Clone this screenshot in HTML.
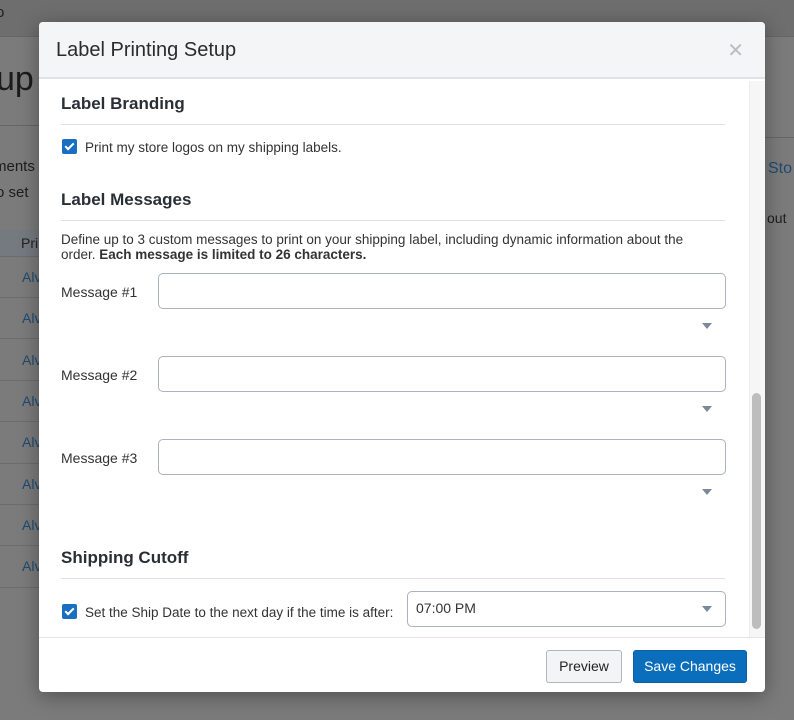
<!DOCTYPE html>
<html><head><style>
*{box-sizing:border-box;margin:0;padding:0}
body{width:794px;height:720px;overflow:hidden;background:#7b7b7b;font-family:"Liberation Sans",sans-serif;position:relative;color:#222}
.abs{position:absolute}
.bgt{font-size:15px;color:#1d1d1d}
.row{position:absolute;left:0;width:39px;height:1px;background:#6c6c6c}
.alw{position:absolute;left:22px;font-size:14px;color:#1f4a70}
.modal{position:absolute;left:39px;top:22px;width:726px;height:670px;background:#fff;border-radius:4px;overflow:hidden;box-shadow:0 4px 20px rgba(0,0,0,.35)}
.hdr{height:57px;background:#f4f5f6;border-bottom:2px solid #e0e3e6;padding:17px 0 0 17px;font-size:20px;color:#2b2b2b}
.x{position:absolute;right:21px;top:16px;font-size:20px;color:#b8bec5}
h3{position:absolute;left:22px;font-size:17px;font-weight:bold;color:#2a2f35}
.line{position:absolute;left:22px;width:664px;height:1px;background:#dde1e5}
.cb{position:absolute;left:23px;width:15px;height:15px;background:#1a6fc0;border-radius:2px}
.cb:after{content:"";position:absolute;left:5px;top:2px;width:3px;height:7px;border:solid #fff;border-width:0 2px 2px 0;transform:rotate(45deg)}
.t{position:absolute;font-size:13.5px;color:#333}
.inp{position:absolute;left:119px;width:568px;height:36px;border:1px solid #aab3bd;border-radius:5px}
.arr{position:absolute;width:0;height:0;border-left:5px solid transparent;border-right:5px solid transparent;border-top:6px solid #7a8a9a}
.lbl{position:absolute;left:22px;font-size:14px;color:#333}
.foot{position:absolute;left:0;top:615px;width:726px;height:55px;border-top:1px solid #e3e6e9}
.btn{position:absolute;top:12px;height:33px;border-radius:3px;font-size:14px;text-align:center;line-height:31px}
</style></head><body>
<div class="abs" style="left:0;top:0;width:794px;height:36px;background:#6e6e6e"></div>
<div class="abs bgt" style="left:-4px;top:4px;">o</div>
<div class="abs" style="left:0;top:36px;width:794px;height:1px;background:#666"></div>
<div class="abs" style="left:-4px;top:60px;font-size:34px;color:#1b1b1b">up</div>
<div class="abs" style="left:0;top:125px;width:39px;height:1px;background:#666"></div>
<div class="abs bgt" style="left:-6px;top:158px">ments</div>
<div class="abs bgt" style="left:-4px;top:184px">o set</div>
<div class="abs" style="left:0;top:230px;width:39px;height:27px;background:#747a80"></div>
<div class="abs" style="left:21px;top:235px;font-size:14px;color:#222">Pri</div>
<div class="row" style="top:256px"></div><div class="row" style="top:297px"></div><div class="row" style="top:338px"></div><div class="row" style="top:380px"></div><div class="row" style="top:421px"></div><div class="row" style="top:463px"></div><div class="row" style="top:504px"></div><div class="row" style="top:545px"></div><div class="row" style="top:587px"></div>
<div class="alw" style="top:269px">Alv</div><div class="alw" style="top:310px">Alv</div><div class="alw" style="top:352px">Alv</div><div class="alw" style="top:393px">Alv</div><div class="alw" style="top:434px">Alv</div><div class="alw" style="top:476px">Alv</div><div class="alw" style="top:517px">Alv</div><div class="alw" style="top:558px">Alv</div>
<div class="abs" style="left:765px;top:137px;width:29px;height:1px;background:#666"></div>
<div class="abs" style="left:768px;top:160px;font-size:16px;color:#1f4a70">Sto</div>
<div class="abs" style="left:767px;top:210px;font-size:14px;color:#1d1d1d">out</div>

<div class="modal">
<div class="hdr">Label Printing Setup</div>
<div class="x">✕</div>
<div class="abs" style="left:710px;top:59px;width:16px;height:556px;background:#f6f6f6;border-left:1px solid #ececec"></div>
<div class="abs" style="left:713px;top:371px;width:9px;height:236px;background:#bdbdbd;border-radius:5px"></div>
<h3 style="top:72px">Label Branding</h3>
<div class="line" style="top:102px"></div>
<div class="cb" style="top:117px"></div>
<div class="t" style="left:46px;top:118px">Print my store logos on my shipping labels.</div>
<h3 style="top:168px">Label Messages</h3>
<div class="line" style="top:198px"></div>
<div class="t" style="left:22px;top:210px;width:655px;line-height:15px">Define up to 3 custom messages to print on your shipping label, including dynamic information about the order. <b>Each message is limited to 26 characters.</b></div>
<div class="lbl" style="top:262px">Message #1</div><div class="inp" style="top:251px"></div><div class="arr" style="left:663px;top:301px"></div>
<div class="lbl" style="top:345px">Message #2</div><div class="inp" style="top:334px"></div><div class="arr" style="left:663px;top:384px"></div>
<div class="lbl" style="top:428px">Message #3</div><div class="inp" style="top:417px"></div><div class="arr" style="left:663px;top:467px"></div>
<h3 style="top:526px">Shipping Cutoff</h3>
<div class="line" style="top:556px"></div>
<div class="cb" style="top:582px"></div>
<div class="t" style="left:46px;top:583px">Set the Ship Date to the next day if the time is after:</div>
<div class="inp" style="left:368px;width:319px;top:569px"></div>
<div class="abs" style="left:377px;top:578px;font-size:14px;color:#333">07:00 PM</div>
<div class="arr" style="left:663px;top:584px"></div>
<div class="foot">
<div class="btn" style="left:507px;width:76px;background:#f2f4f6;border:1px solid #aeb6bf;color:#222">Preview</div>
<div class="btn" style="left:594px;width:114px;background:#0a6ebd;border:1px solid #0a5fa5;color:#fff">Save Changes</div>
</div>
</div>
</body></html>
